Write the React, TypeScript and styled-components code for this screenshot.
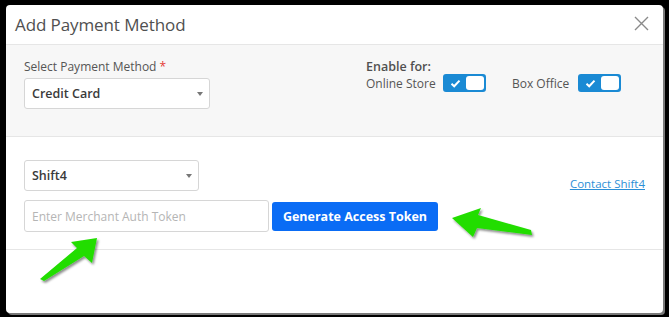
import React from 'react'
import styled, { createGlobalStyle } from 'styled-components'

const GlobalStyle = createGlobalStyle`
  html, body {
    margin: 0;
    padding: 0;
    background: #000;
    font-family: 'Open Sans', 'Liberation Sans', sans-serif;
  }
`

const Screen = styled.div`
  position: relative;
  width: 669px;
  height: 317px;
  padding: 5px 6px 4px 6px;
  box-sizing: border-box;
  background: #000;
`

const Modal = styled.div`
  height: 308px;
  background: #fff;
  border-radius: 4px;
  box-shadow: 2px 2px 0 #7a7a7a;
  display: flex;
  flex-direction: column;
  overflow: hidden;
`

const Header = styled.div`
  height: 39px;
  flex: 0 0 39px;
  display: flex;
  align-items: center;
  justify-content: space-between;
  padding: 0 14px 0 9px;
  border-bottom: 1px solid #e6e6e6;
`

const Title = styled.h4`
  margin: 0;
  font-size: 17px;
  font-weight: 400;
  color: #505050;
  letter-spacing: -0.1px;
`

const Close = styled.button`
  border: none;
  background: transparent;
  padding: 0;
  width: 16px;
  height: 16px;
  display: flex;
  align-items: center;
  justify-content: center;
  margin-top: -2px;
`

const Section = styled.div<{ $muted?: boolean; $h: number }>`
  flex: 0 0 ${({ $h }) => $h}px;
  height: ${({ $h }) => $h}px;
  box-sizing: border-box;
  background: ${({ $muted }) => ($muted ? '#f7f7f7' : '#fff')};
  border-bottom: 1px solid #e6e6e6;
  display: flex;
`

const TopSection = styled(Section)`
  padding: 14px 0 0 18px;
`

const ShiftSection = styled(Section)`
  padding: 23px 18px 0 18px;
  justify-content: space-between;
`

const Column = styled.div<{ $w?: number }>`
  display: flex;
  flex-direction: column;
  ${({ $w }) => ($w ? `flex: 0 0 ${$w}px;` : '')}
`

const Label = styled.label`
  font-size: 12px;
  color: #555;
  line-height: 16px;
  margin-bottom: 3px;
`

const Star = styled.span`
  color: #e53935;
`

const Select = styled.div<{ $w: number }>`
  width: ${({ $w }) => $w}px;
  height: 31px;
  box-sizing: border-box;
  border: 1px solid #d6d6d6;
  border-radius: 3px;
  background: #fff;
  display: flex;
  align-items: center;
  justify-content: space-between;
  padding: 0 6px 0 7px;
  font-size: 12.5px;
  font-weight: 600;
  color: #3a3a3a;
`

const Caret = styled.span`
  width: 0;
  height: 0;
  border-left: 3.5px solid transparent;
  border-right: 3.5px solid transparent;
  border-top: 4px solid #777;
  margin-top: 1px;
`

const EnableTitle = styled.div`
  font-size: 12.5px;
  font-weight: 600;
  color: #505050;
  line-height: 16px;
`

const ToggleRow = styled.div`
  display: flex;
  align-items: center;
  margin-top: -1px;
`

const ToggleLabel = styled.span<{ $w: number }>`
  width: ${({ $w }) => $w}px;
  font-size: 12px;
  color: #555;
`

const Toggle = styled.div`
  width: 43px;
  height: 18px;
  box-sizing: border-box;
  border: 2px solid #1a8ad4;
  border-radius: 3px;
  background: #1a8ad4;
  display: flex;
  align-items: center;
  margin-right: 26px;
`

const Check = styled.span`
  flex: 0 0 21px;
  display: flex;
  align-items: center;
  justify-content: center;
`

const Knob = styled.span`
  flex: 1;
  height: 14px;
  background: #fff;
  border-radius: 3px;
`

const TokenRow = styled.div`
  display: flex;
  align-items: center;
  margin-top: 9px;
  gap: 3px;
`

const TokenInput = styled.input`
  width: 245px;
  height: 32px;
  box-sizing: border-box;
  border: 1px solid #d6d6d6;
  border-radius: 3px;
  padding: 0 7px;
  font-family: 'Open Sans', 'Liberation Sans', sans-serif;
  font-size: 12px;
  color: #333;
  &::placeholder {
    color: #b5b5b5;
  }
  &:focus {
    outline: none;
  }
`

const PrimaryButton = styled.button`
  height: 29px;
  width: 166px;
  border: none;
  border-radius: 3px;
  background: #0a6cf5;
  color: #fff;
  font-family: 'Open Sans', 'Liberation Sans', sans-serif;
  font-size: 12.5px;
  font-weight: 700;
  padding: 0;
`

const ContactLink = styled.a`
  font-size: 11.5px;
  color: #2d8fd6;
  text-decoration: underline;
  margin-top: 16px;
  height: 16px;
`

const Overlay = styled.svg`
  position: absolute;
  left: 0;
  top: 0;
  pointer-events: none;
`

const CheckIcon = () => (
  <svg width="11" height="9" viewBox="0 0 11 9">
    <path d="M1.5 4.8 L4.2 7.3 L9.5 1.6" fill="none" stroke="#fff" strokeWidth="2" />
  </svg>
)

const Switch = () => (
  <Toggle>
    <Check>
      <CheckIcon />
    </Check>
    <Knob />
  </Toggle>
)

const App = () => {
  return (
    <Screen>
      <GlobalStyle />
      <Modal>
        <Header>
          <Title>Add Payment Method</Title>
          <Close aria-label="Close">
            <svg width="15" height="15" viewBox="0 0 15 15">
              <path d="M1 1 L14 14 M14 1 L1 14" stroke="#8a8a8a" strokeWidth="1.4" />
            </svg>
          </Close>
        </Header>
        <TopSection $muted $h={92}>
          <Column $w={342}>
            <Label>
              Select Payment Method <Star>*</Star>
            </Label>
            <Select $w={186}>
              Credit Card
              <Caret />
            </Select>
          </Column>
          <Column>
            <EnableTitle>Enable for:</EnableTitle>
            <ToggleRow>
              <ToggleLabel $w={77}>Online Store</ToggleLabel>
              <Switch />
              <ToggleLabel $w={66}>Box Office</ToggleLabel>
              <Switch />
            </ToggleRow>
          </Column>
        </TopSection>
        <ShiftSection $h={113}>
          <Column>
            <Select $w={175}>
              Shift4
              <Caret />
            </Select>
            <TokenRow>
              <TokenInput placeholder="Enter Merchant Auth Token" />
              <PrimaryButton>Generate Access Token</PrimaryButton>
            </TokenRow>
          </Column>
          <ContactLink href="#">Contact Shift4</ContactLink>
        </ShiftSection>
      </Modal>
      <Overlay width="669" height="317" viewBox="0 0 669 317">
        <defs>
          <filter id="sh" x="-20%" y="-20%" width="140%" height="140%">
            <feDropShadow dx="1.5" dy="2" stdDeviation="1.2" floodColor="#000" floodOpacity="0.45" />
          </filter>
        </defs>
        <polygon
          points="97,238 71,242 77,248 40,279 44,281 84,256 92,263"
          fill="#22dd00"
          filter="url(#sh)"
        />
        <polygon
          points="452,218 481,208 478,215 531,230 532,235 477,228 473,237"
          fill="#22dd00"
          filter="url(#sh)"
        />
      </Overlay>
    </Screen>
  )
}

export default App
